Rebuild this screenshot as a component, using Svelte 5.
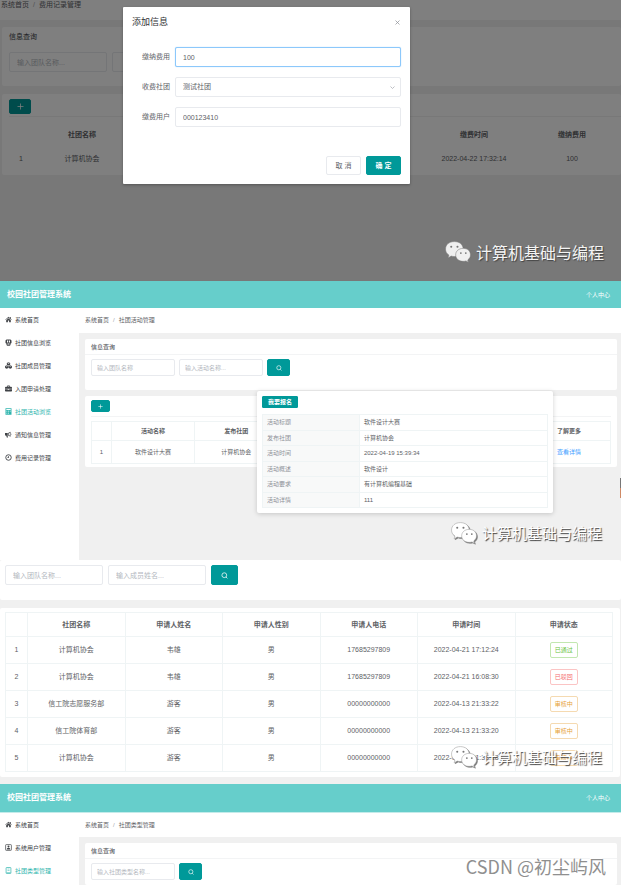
<script lang="ts">
  type Status = "pass" | "reject" | "pending";

  const clubMenu = [
    { icon: "home", label: "系统首页" },
    { icon: "badge", label: "社团信息浏览" },
    { icon: "cubes", label: "社团成员管理" },
    { icon: "case", label: "入团申请处理" },
    { icon: "calc", label: "社团活动浏览" },
    { icon: "horn", label: "通知信息管理" },
    { icon: "clock", label: "费用记录管理" },
  ];

  const adminMenu = [
    { icon: "home", label: "系统首页" },
    { icon: "user", label: "系统用户管理" },
    { icon: "tablet", label: "社团类型管理" },
  ];

  const activity = [
    ["活动标题", "软件设计大赛"],
    ["发布社团", "计算机协会"],
    ["活动时间", "2022-04-19 15:39:34"],
    ["活动概述", "软件设计"],
    ["活动要求", "有计算机编程基础"],
    ["活动详情", "111"],
  ];

  const statusText: Record<Status, string> = {
    pass: "已通过",
    reject: "已驳回",
    pending: "审核中",
  };

  const applies: { club: string; name: string; phone: string; time: string; status: Status }[] = [
    { club: "计算机协会", name: "韦雄", phone: "17685297809", time: "2022-04-21 17:12:24", status: "pass" },
    { club: "计算机协会", name: "韦雄", phone: "17685297809", time: "2022-04-21 16:08:30", status: "reject" },
    { club: "信工院志愿服务部", name: "游客", phone: "00000000000", time: "2022-04-13 21:33:22", status: "pending" },
    { club: "信工院体育部", name: "游客", phone: "00000000000", time: "2022-04-13 21:33:20", status: "pending" },
    { club: "计算机协会", name: "游客", phone: "00000000000", time: "2022-04-13 21:33:18", status: "pending" },
  ];

  let fee = $state("100");
  let payer = $state("000123410");
</script>

{#snippet icon(name: string)}
  <svg class="icon" viewBox="0 0 14 14" aria-hidden="true">
    {#if name === "home"}
      <path d="M7 1.5 0.5 7.3l0.8 0.9L7 3.3l5.7 4.9 0.8-0.9L11.5 5.5V2H9.8v2z" />
      <path d="M7 4.4 2.4 8.3V12.5h3.4V9.2h2.4v3.3h3.4V8.3z" />
    {:else if name === "badge"}
      <path d="M3 1h8l2 2v5l-2 1.5V12l-1.5 1.5h-5L3 12V9.5L1 8V3z" />
      <path d="M4 3h2.2v4H4zM7.8 3H10v4H7.8zM5 9h4v1H5zM5 11h4v1H5z" fill="#fff" />
    {:else if name === "cubes"}
      <path d="M7 0.5 10.3 2v3.6L7 7.2 3.7 5.6V2zM3.5 6.6 6.7 8v3.8l-3.2 1.5L0.2 11.8V8zM10.5 6.6 13.8 8v3.8l-3.3 1.5-3.2-1.5V8z" />
      <path d="M5 2.4 7 3.3l2-0.9-2-0.8zM1.6 8.4l1.9 0.8 1.9-0.8-1.9-0.8zM8.6 8.4l1.9 0.8 1.9-0.8-1.9-0.8z" fill="#fff" />
    {:else if name === "case"}
      <path d="M4.2 3.5V2q0-1 1-1h3.6q1 0 1 1v1.5H12q2 0 2 2v2H0v-2q0-2 2-2zM5.6 2.4v1.1h2.8V2.4zM0 8.5h5.4v1.2h3.2V8.5H14v3q0 1.5-1.5 1.5h-11Q0 13 0 11.5z" />
    {:else if name === "calc"}
      <path d="M1 0.5h12v13H1z" />
      <path d="M2.6 2h8.8v2H2.6zM2.6 5.6h2v1.6h-2zM6 5.6h2v1.6H6zM9.4 5.6h2v1.6h-2zM2.6 9.6h2v1.6h-2zM6 9.6h2v1.6H6z" fill="#fff" />
    {:else if name === "horn"}
      <path d="M0 4h5.5v5H5l1 4H3.6L2.4 9H0zM6.3 4 11 1.5v10L6.3 9z" />
      <path d="M7.5 4.8 9.8 3.5v6L7.5 8.2z" fill="#fff" />
      <path d="M12 4.8q1.8 1.7 0 3.4z" />
    {:else if name === "clock"}
      <circle cx="7" cy="7" r="5.5" fill="none" stroke="currentColor" stroke-width="1.8" />
      <path d="M6.3 3.8h1.4V7.8H4.8V6.4h1.5z" />
    {:else if name === "user"}
      <rect x="1.2" y="1.2" width="11.6" height="11.6" rx="1.4" fill="none" stroke="currentColor" stroke-width="1.4" />
      <circle cx="7" cy="5.2" r="2" />
      <path d="M3.2 11.2q0-3.6 3.8-3.6t3.8 3.6z" />
    {:else if name === "tablet"}
      <rect x="2.2" y="1" width="9.6" height="12" rx="1" fill="none" stroke="currentColor" stroke-width="1.4" />
      <path d="M3 10h8v1H3zM5 3.5h4v0.8H5zM5 6h4v0.8H5z" />
    {/if}
  </svg>
{/snippet}

{#snippet searchButton()}
  <button type="button" class="primary search" aria-label="搜索">
    <svg viewBox="0 0 14 14" aria-hidden="true">
      <circle cx="6.6" cy="6.4" r="4.8" />
      <path d="M10 10l2.8 2.8" />
    </svg>
  </button>
{/snippet}

{#snippet addButton()}
  <button type="button" class="primary add" aria-label="添加">
    <svg viewBox="0 0 14 14" aria-hidden="true"><path d="M7 1v12M1 7h12" /></svg>
  </button>
{/snippet}

{#snippet watermark()}
  <div class="watermark">
    <svg viewBox="0 0 50 42" aria-hidden="true">
      <path d="M18 1C8 1 1 7 1 15.500c0 5 2.500 8.700 6.500 11.300L6 32l6-3.200c2 .6 4 1 6.500 1C28 30 35 24 35 15.500 35 7 28 1 18 1z" />
      <path d="M35 14c-8.500 0-14.500 5.300-14.500 12.500S26.500 39 35 39c2 0 3.600-.3 5.300-.9l4.700 2.600-1.300-4.400c3.400-2.400 5.300-5.600 5.300-9.800C49 19.300 43.500 14 35 14z" />
      <g class="eyes">
        <circle cx="12" cy="11" r="2" /><circle cx="24" cy="11" r="2" />
        <circle cx="30.500" cy="23" r="1.700" /><circle cx="40" cy="23" r="1.700" />
      </g>
    </svg>
    <span>计算机基础与编程</span>
  </div>
{/snippet}

{#snippet sidebar(items: { icon: string; label: string }[], active: string)}
  <nav class="sidebar">
    {#each items as item (item.label)}
      <a href="#{item.icon}" class:active={item.label === active}>
        {@render icon(item.icon)}
        {item.label}
      </a>
    {/each}
  </nav>
{/snippet}

{#snippet topbar()}
  <header class="topbar">
    <h1>校园社团管理系统</h1>
    <a href="#profile">个人中心</a>
  </header>
{/snippet}

<section class="screen fees">
  <div class="crumbs">系统首页<i>/</i>费用记录管理</div>
  <div class="panel">
    <h2>信息查询</h2>
    <div class="filters">
      <input type="text" placeholder="输入团队名称..." aria-label="团队名称" />
      <input type="text" aria-label="用户" />
    </div>
  </div>
  <div class="panel list">
    <div class="tools">{@render addButton()}</div>
    <table class="plain">
      <thead>
        <tr><th class="index"></th><th>社团名称</th><th></th><th></th><th></th><th>缴费时间</th><th>缴纳费用</th></tr>
      </thead>
      <tbody>
        <tr><td>1</td><td>计算机协会</td><td></td><td></td><td></td><td>2022-04-22 17:32:14</td><td>100</td></tr>
      </tbody>
    </table>
  </div>

  <div class="mask">
    <form class="dialog" onsubmit={(event) => event.preventDefault()}>
      <div class="dialog-head">
        <h2>添加信息</h2>
        <button type="button" class="close" aria-label="关闭">
          <svg viewBox="0 0 10 10" aria-hidden="true"><path d="M1 1l8 8M9 1l-8 8" /></svg>
        </button>
      </div>
      <div class="field">
        <label for="fee">缴纳费用</label>
        <input id="fee" class="focused" type="text" bind:value={fee} />
      </div>
      <div class="field">
        <label for="club">收费社团</label>
        <div class="select">
          <select id="club"><option>测试社团</option></select>
          <svg viewBox="0 0 10 10" aria-hidden="true"><path d="M1 3l4 4 4-4" /></svg>
        </div>
      </div>
      <div class="field">
        <label for="payer">缴费用户</label>
        <input id="payer" type="text" bind:value={payer} />
      </div>
      <div class="actions">
        <button type="button" class="cancel">取 消</button>
        <button type="submit" class="primary">确 定</button>
      </div>
    </form>
    {@render watermark()}
  </div>
</section>

<section class="screen small activities">
  {@render topbar()}
  <div class="body">
    {@render sidebar(clubMenu, "社团活动浏览")}
    <main>
      <div class="crumbs">系统首页<i>/</i>社团活动管理</div>
      <div class="panel">
        <h2>信息查询</h2>
        <div class="filters">
          <input type="text" placeholder="输入团队名称" aria-label="团队名称" />
          <input type="text" placeholder="输入活动名称..." aria-label="活动名称" />
          {@render searchButton()}
        </div>
      </div>
      <div class="panel list">
        <div class="tools">{@render addButton()}</div>
        <table>
          <thead>
            <tr><th class="index"></th><th>活动名称</th><th>发布社团</th><th></th><th></th><th></th><th>了解更多</th></tr>
          </thead>
          <tbody>
            <tr><td>1</td><td>软件设计大赛</td><td>计算机协会</td><td></td><td></td><td></td><td><a href="#detail">查看详情</a></td></tr>
          </tbody>
        </table>
        <div class="popover">
          <button type="button" class="primary">我要报名</button>
          <table>
            <tbody>
              {#each activity as [label, value] (label)}
                <tr><th scope="row">{label}</th><td>{value}</td></tr>
              {/each}
            </tbody>
          </table>
        </div>
      </div>
    </main>
  </div>
  <span class="side-tab"></span>
  {@render watermark()}
</section>

<section class="screen applies">
  <div class="panel">
    <div class="filters">
      <input type="text" placeholder="输入团队名称..." aria-label="团队名称" />
      <input type="text" placeholder="输入成员姓名..." aria-label="成员姓名" />
      {@render searchButton()}
    </div>
  </div>
  <div class="panel list">
    <table>
      <thead>
        <tr>
          <th class="index"></th><th>社团名称</th><th>申请人姓名</th><th>申请人性别</th>
          <th>申请人电话</th><th>申请时间</th><th>申请状态</th>
        </tr>
      </thead>
      <tbody>
        {#each applies as row, i (i)}
          <tr>
            <td>{i + 1}</td>
            <td>{row.club}</td>
            <td>{row.name}</td>
            <td>男</td>
            <td>{row.phone}</td>
            <td>{row.time}</td>
            <td><span class="tag {row.status}">{statusText[row.status]}</span></td>
          </tr>
        {/each}
      </tbody>
    </table>
  </div>
  {@render watermark()}
</section>

<section class="screen small types">
  {@render topbar()}
  <div class="body">
    {@render sidebar(adminMenu, "社团类型管理")}
    <main>
      <div class="crumbs">系统首页<i>/</i>社团类型管理</div>
      <div class="panel">
        <h2>信息查询</h2>
        <div class="filters">
          <input type="text" placeholder="输入社团类型名称..." aria-label="社团类型名称" />
          {@render searchButton()}
        </div>
      </div>
    </main>
  </div>
  <div class="csdn">CSDN @初尘屿风</div>
</section>

<style>
  :global(body) {
    background: #f0f0f0;
  }
  .screen {
    position: relative;
    overflow: hidden;
    background: #f0f0f0;
    color: #606266;
    font: 7px/10px "Liberation Sans", "Noto Sans CJK SC", sans-serif;
  }
  .screen *,
  .screen {
    box-sizing: border-box;
  }
  .small {
    font-size: 6px;
  }
  h1,
  h2 {
    margin: 0;
    font-size: inherit;
    font-weight: 400;
  }
  a {
    color: inherit;
    text-decoration: none;
  }
  input,
  select,
  button {
    margin: 0;
    border: 1px solid #e8eaee;
    border-radius: 2px;
    background: #fff;
    color: #606266;
    font: inherit;
    outline: none;
  }
  input,
  select {
    height: 20px;
    padding: 0 7px;
  }
  .small input {
    height: 17px;
    padding: 0 5px;
  }
  input::placeholder {
    color: #b4b8c0;
  }
  button {
    padding: 0;
    text-align: center;
  }
  .primary {
    border-color: #009999;
    background: #009999;
    color: #fff;
  }
  button svg,
  .select svg {
    display: block;
    margin: auto;
    width: 7px;
    height: 7px;
    fill: none;
    stroke: currentColor;
    stroke-width: 1.5;
  }
  .search {
    width: 27px;
    height: 20px;
  }
  .small .search {
    width: 23px;
    height: 17px;
  }
  .small .search svg {
    width: 6px;
    height: 6px;
  }
  .add {
    width: 22px;
    height: 15px;
  }
  .small .add {
    width: 19px;
    height: 12px;
  }
  .small .add svg {
    width: 5px;
    height: 5px;
  }

  .crumbs {
    background: #fff;
  }
  .crumbs i {
    margin: 0 4px;
    font-style: normal;
    color: #a0a4aa;
  }
  .panel {
    border-radius: 2px;
    background: #fff;
  }
  .panel h2 {
    color: #404347;
  }
  .filters {
    display: flex;
    gap: 5px;
  }
  .filters input {
    width: 98px;
  }
  .small .filters {
    gap: 4px;
  }
  .small .filters input {
    width: 84px;
  }

  table {
    width: 100%;
    border-spacing: 0;
    border-collapse: collapse;
    table-layout: fixed;
  }
  th,
  td {
    padding: 0;
    border: 1px solid #eff4f5;
    text-align: center;
  }
  th {
    font-weight: 700;
  }

  .fees {
    padding-bottom: 106px;
  }
  .fees .crumbs {
    height: 20px;
    padding-left: 1px;
  }
  .fees .panel {
    margin: 7px 0 0 2px;
    padding: 5px 0 14px 7px;
  }
  .fees .filters {
    margin-top: 10px;
  }
  .fees .list {
    margin-top: 8px;
    padding: 5px 0 5px 7px;
  }
  .fees .tools {
    height: 18px;
    border-bottom: 1px solid #f0f0f0;
  }
  .fees .index {
    width: 24px;
  }
  .plain th,
  .plain td {
    height: 23px;
    border: 0;
  }
  .plain thead th {
    padding-top: 6px;
    height: 30px;
  }
  .mask {
    position: absolute;
    inset: 0;
    background: rgba(0, 0, 0, 0.5);
  }
  .dialog {
    display: flex;
    flex-direction: column;
    gap: 10px;
    width: 287px;
    margin: 7px 0 0 123px;
    padding: 9px;
    border-radius: 1px;
    background: #fff;
    box-shadow: 0 1px 3px rgba(0, 0, 0, 0.3);
  }
  .dialog-head {
    display: flex;
    justify-content: space-between;
    align-items: center;
    height: 12px;
    margin-bottom: 9px;
  }
  .dialog-head h2 {
    color: #303133;
    font-size: 9px;
  }
  .close {
    width: 8px;
    height: 8px;
    border: 0;
    color: #909399;
  }
  .close svg {
    width: 5px;
    height: 5px;
  }
  .field {
    display: flex;
    align-items: center;
    gap: 5px;
  }
  .field label {
    width: 38px;
    text-align: right;
  }
  .field input,
  .select {
    flex: 1;
  }
  .field .focused {
    border-color: #8cc8fb;
    box-shadow: 0 0 1px #8cc8fb;
  }
  .select {
    display: grid;
    align-items: center;
  }
  .select select,
  .select svg {
    grid-area: 1 / 1;
  }
  .select select {
    width: 100%;
    appearance: none;
  }
  .select svg {
    width: 5px;
    height: 5px;
    margin: 0 6px 0 auto;
    color: #a8abb2;
    pointer-events: none;
  }
  .actions {
    display: flex;
    justify-content: flex-end;
    gap: 5px;
    margin-top: 19px;
  }
  .actions button {
    width: 35px;
    height: 19px;
  }
  .actions .primary {
    font-weight: 700;
  }

  .topbar {
    display: flex;
    align-items: center;
    justify-content: space-between;
    height: 27px;
    padding: 0 11px 0 7px;
    background: #66cecb;
    color: #fff;
  }
  .types .topbar {
    height: 29px;
    border-bottom: 1px solid #c4ebea;
  }
  .topbar h1 {
    font-size: 8px;
    font-weight: 700;
  }
  .body {
    display: flex;
  }
  .sidebar {
    width: 79px;
    background: #fff;
    color: #404347;
  }
  .sidebar a {
    display: flex;
    align-items: center;
    gap: 3px;
    height: 23px;
    padding-left: 5px;
  }
  .sidebar .active {
    color: #2fb5ae;
  }
  .icon {
    width: 7px;
    height: 7px;
    fill: currentColor;
  }
  main {
    flex: 1;
    min-width: 0;
  }
  .small .crumbs {
    height: 25px;
    padding: 7px 0 0 6px;
  }
  .types .crumbs {
    height: 24px;
  }
  .small .panel {
    margin: 6px 4px 0 6px;
    padding-bottom: 5px;
  }
  .small .panel h2 {
    height: 16px;
    padding: 3px 6px 0;
    border-bottom: 1px solid #f3f4f5;
  }
  .small .filters {
    padding: 4px 6px 0;
  }
  .activities .panel {
    padding-bottom: 14px;
  }
  .activities main {
    padding-bottom: 93px;
  }
  .activities .list {
    position: relative;
    padding: 4px 6px 3px;
  }
  .activities .tools {
    height: 17px;
    margin-bottom: 4px;
    border-bottom: 1px solid #f3f4f5;
  }
  .activities .list > table thead tr {
    height: 19px;
  }
  .activities .list > table tbody tr {
    height: 23px;
  }
  .activities .index {
    width: 20px;
  }
  .activities td a {
    color: #409eff;
  }
  .popover {
    position: absolute;
    top: -5px;
    left: 172px;
    width: 296px;
    padding: 5px;
    border-radius: 2px;
    background: #fff;
    box-shadow: 0 1px 5px rgba(0, 0, 0, 0.18);
  }
  .popover .primary {
    display: block;
    width: 36px;
    height: 12px;
    margin-bottom: 6px;
    border-radius: 1px;
    font-weight: 700;
    line-height: 8px;
  }
  .popover table {
    height: 94px;
  }
  .popover th,
  .popover td {
    padding-left: 4px;
    text-align: left;
  }
  .popover th {
    width: 34%;
    background: #f8f9f9;
    color: #909399;
    font-weight: 400;
  }
  .side-tab {
    position: absolute;
    right: 0;
    bottom: 62px;
    width: 1px;
    height: 20px;
    background: linear-gradient(#777 50%, #cf8a66 50%);
  }

  .applies .panel {
    padding: 5px;
  }
  .applies .panel:first-child {
    padding-bottom: 15px;
  }
  .applies .list {
    margin: 8px 1px 7px 0;
    padding: 4px 7px 5px 5px;
  }
  .applies tr {
    height: 27px;
  }
  .applies thead tr {
    height: 24px;
  }
  .applies .index {
    width: 22px;
  }
  .tag {
    display: inline-block;
    width: 28px;
    height: 16px;
    border: 1px solid;
    border-radius: 2px;
    font-size: 6px;
    line-height: 14px;
    vertical-align: middle;
  }
  .pass {
    border-color: #c2e7b0;
    color: #67c23a;
  }
  .reject {
    border-color: #fbc4c4;
    color: #f56c6c;
  }
  .pending {
    border-color: #f5dab1;
    color: #e6a23c;
  }

  .watermark {
    position: absolute;
    right: 19px;
    bottom: 15px;
    display: flex;
    align-items: center;
    gap: 5px;
    color: #fff;
    font: 15px/24px "Noto Sans CJK SC", sans-serif;
    text-shadow: 1px 1px 1px #444;
  }
  .watermark svg {
    width: 26px;
    height: 22px;
    fill: #fff;
    stroke: #999;
    stroke-width: 1;
    filter: drop-shadow(1px 1px 0 #777);
  }
  .fees .watermark {
    right: 17px;
    bottom: 17px;
    font-size: 16px;
    color: #f4f4f4;
  }
  .fees .watermark svg {
    fill: #f0f0f0;
    stroke: #777;
  }
  .eyes {
    fill: #777;
    stroke: none;
  }
  .csdn {
    position: absolute;
    right: 15px;
    bottom: 6px;
    color: #8f8f8f;
    font: 400 18px/26px "Noto Sans CJK SC", sans-serif;
    text-shadow: -1px -1px 0 #fff;
  }
</style>
